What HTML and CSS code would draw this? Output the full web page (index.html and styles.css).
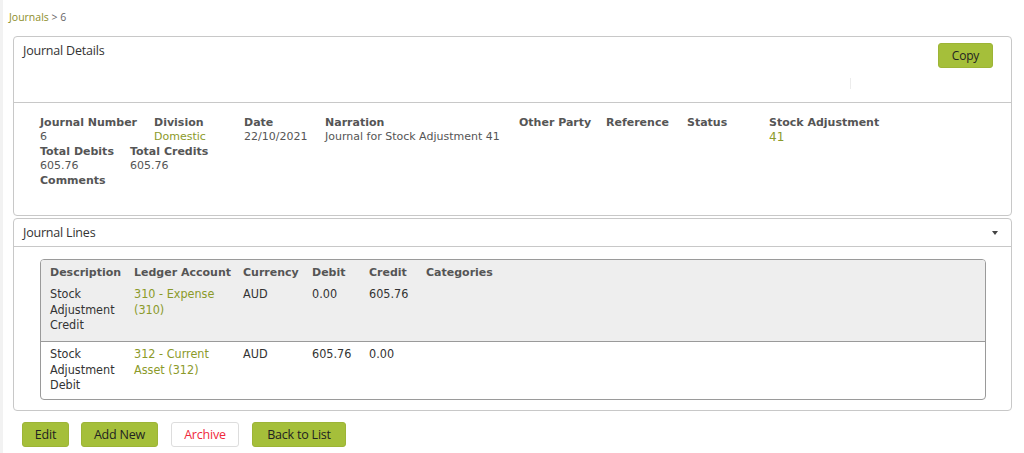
FILE: index.html
```html
<!DOCTYPE html>
<html>
<head>
<meta charset="utf-8">
<link rel="stylesheet" href="styles.css">
</head>
<body>
<div class="page">
  <div class="crumbs"><a class="link" href="#">Journals</a> &gt; 6</div>

  <section class="panel details">
    <div class="panel-head head-tall">
      <span class="panel-title">Journal Details</span>
      <button class="btn btn-green btn-copy">Copy</button>
      <span class="tick"></span>
    </div>
    <div class="panel-body details-body">
      <div class="drow">
        <div class="field w114"><div class="lbl">Journal Number</div><div class="val">6</div></div>
        <div class="field w90"><div class="lbl">Division</div><div class="val green">Domestic</div></div>
        <div class="field w81"><div class="lbl">Date</div><div class="val">22/10/2021</div></div>
        <div class="field w194"><div class="lbl">Narration</div><div class="val">Journal for Stock Adjustment 41</div></div>
        <div class="field w87"><div class="lbl">Other Party</div><div class="val"></div></div>
        <div class="field w81"><div class="lbl">Reference</div><div class="val"></div></div>
        <div class="field w82"><div class="lbl">Status</div><div class="val"></div></div>
        <div class="field"><div class="lbl">Stock Adjustment</div><div class="val green big">41</div></div>
      </div>
      <div class="drow">
        <div class="field w90"><div class="lbl">Total Debits</div><div class="val">605.76</div></div>
        <div class="field w90"><div class="lbl">Total Credits</div><div class="val">605.76</div></div>
      </div>
      <div class="drow">
        <div class="field"><div class="lbl">Comments</div></div>
      </div>
    </div>
  </section>

  <section class="panel lines">
    <div class="panel-head head-short">
      <span class="panel-title">Journal Lines</span>
      <span class="caret"></span>
    </div>
    <div class="panel-body lines-body">
      <div class="tbl">
        <table>
          <colgroup>
            <col class="c1"><col class="c2"><col class="c3"><col class="c4"><col class="c5"><col>
          </colgroup>
          <tbody class="shade">
            <tr class="th">
              <td>Description</td><td>Ledger Account</td><td>Currency</td><td>Debit</td><td>Credit</td><td>Categories</td>
            </tr>
            <tr class="row first">
              <td>Stock<br>Adjustment<br>Credit</td><td class="green">310 - Expense<br>(310)</td><td>AUD</td><td>0.00</td><td>605.76</td><td></td>
            </tr>
          </tbody>
          <tbody>
            <tr class="row second">
              <td>Stock<br>Adjustment<br>Debit</td><td class="green">312 - Current<br>Asset (312)</td><td>AUD</td><td>605.76</td><td>0.00</td><td></td>
            </tr>
          </tbody>
        </table>
      </div>
    </div>
  </section>

  <div class="actions">
    <button class="btn btn-green w47">Edit</button>
    <button class="btn btn-green w77">Add New</button>
    <button class="btn btn-white w68 gap13">Archive</button>
    <button class="btn btn-green w94 gap13">Back to List</button>
  </div>
</div>
</body>
</html>
```

FILE: styles.css
```css
html, body {
  margin: 0;
  padding: 0;
  background: #fff;
}
body {
  border-left: 3px solid #f2f2f2;
  min-height: 453px;
  box-sizing: border-box;
}
.page {
  padding: 9px 12px 0 10px;
  font-family: "DejaVu Sans", Verdana, sans-serif;
  color: #555;
}
.crumbs {
  font-family: "Open Sans", "Liberation Sans", sans-serif;
  font-size: 10.5px;
  line-height: 16px;
  height: 16px;
  margin-left: -4px;
  color: #666;
}
.link {
  color: #8e8e2a;
  text-decoration: none;
}
.panel {
  border: 1px solid #c8c8c8;
  border-radius: 4px;
  background: #fff;
}
.details {
  margin-top: 11px;
}
.lines {
  margin-top: 2px;
}
.panel-head {
  position: relative;
  border-bottom: 1px solid #c8c8c8;
  padding: 0 9px;
  display: flex;
  align-items: flex-start;
}
.head-tall {
  height: 65px;
}
.head-short {
  height: 27px;
  align-items: center;
}
.panel-title {
  font-family: "Open Sans", "Noto Sans", sans-serif;
  font-size: 12.5px;
  color: #333;
  letter-spacing: -0.2px;
}
.head-tall .panel-title {
  margin-top: 5px;
}
.btn-copy {
  margin-left: auto;
  margin-top: 6px;
  margin-right: 9px;
  width: 55px;
  height: 19px;
}
.tick {
  position: absolute;
  left: 836px;
  top: 41px;
  width: 1px;
  height: 11px;
  background: #ececec;
}
.caret {
  margin-left: auto;
  margin-right: 4px;
  width: 0;
  height: 0;
  border-left: 3px solid transparent;
  border-right: 3px solid transparent;
  border-top: 4px solid #444;
}
.details-body {
  padding: 13px 26px 21px 26px;
  height: 78px;
}
.drow {
  display: flex;
}
.field {
  flex: none;
}
.w114 { width: 114px; }
.w90 { width: 90px; }
.w81 { width: 81px; }
.w194 { width: 194px; }
.w87 { width: 87px; }
.w82 { width: 82px; }
.lbl {
  font-size: 11px;
  font-weight: bold;
  line-height: 14px;
  color: #555;
}
.val {
  font-size: 11px;
  line-height: 14px;
  min-height: 15px;
  color: #555;
}
.val.big {
  font-size: 12px;
}
.green {
  color: #8b9a2a;
}
.lines-body {
  padding: 12px 25px 10px 26px;
}
.tbl {
  border: 1px solid #9a9a9a;
  border-radius: 4px;
  overflow: hidden;
}
table {
  width: 100%;
  border-collapse: collapse;
  table-layout: fixed;
}
.c1 { width: 93px; }
.c2 { width: 109px; }
.c3 { width: 69px; }
.c4 { width: 57px; }
.c5 { width: 57px; }
td {
  padding: 0;
  vertical-align: top;
}
td:first-child {
  padding-left: 9px;
}
.shade {
  background: #eeeeee;
}
.th td {
  font-size: 11px;
  font-weight: bold;
  color: #555;
  padding-top: 6px;
  height: 20px;
  line-height: 14px;
}
.row td {
  font-family: "DejaVu Sans Condensed", "DejaVu Sans", sans-serif;
  font-size: 12.5px;
  line-height: 15.5px;
  color: #333;
}
.row td.green {
  color: #8b9a2a;
}
.first td {
  height: 55px;
}
.second {
  border-top: 1px solid #9a9a9a;
}
.second td {
  padding-top: 4px;
  height: 53px;
}
.actions {
  display: flex;
  gap: 12px;
  margin-top: 11px;
  padding-left: 9px;
}
.gap13 {
  margin-left: 1px;
}
.btn {
  font-family: "Open Sans", "Noto Sans", sans-serif;
  font-size: 12.5px;
  height: 25px;
  padding: 0;
  border-radius: 3px;
  cursor: pointer;
  color: #222;
  letter-spacing: -0.2px;
}
.btn-green {
  background: #a5bf3a;
  border: 1px solid #9db436;
}
.btn-white {
  background: #fff;
  border: 1px solid #ddd;
  color: #f0283c;
}
.btn-copy {
  font-size: 12px;
  line-height: 17px;
}
.w47 { width: 47px; }
.w77 { width: 77px; }
.w68 { width: 68px; }
.w94 { width: 94px; }
```
